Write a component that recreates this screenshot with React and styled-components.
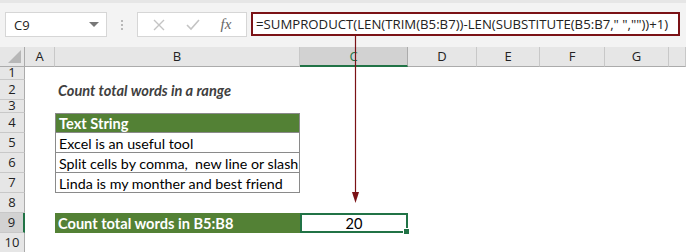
import React from "react";
import styled, { createGlobalStyle, css } from "styled-components";

const Global = createGlobalStyle`
  html, body { margin: 0; padding: 0; background: #ffffff; }
  body { width: 686px; height: 252px; overflow: hidden; }
`;

const UI_FONT = `"Open Sans", "Noto Sans", "DejaVu Sans", sans-serif`;
const CELL_FONT = `"Lato", "Open Sans", sans-serif`;
const GREEN = "#538135";
const SEL = "#217346";
const RED = "#7b1216";

const Page = styled.div`
  position: relative;
  width: 686px;
  height: 252px;
  overflow: hidden;
  background: #fff;
`;

const Toolbar = styled.div`
  height: 47px;
  box-sizing: border-box;
  background: #f3f3f3;
  border-top: 3px solid #e6e6e6;
  padding: 9px 6px 0 5px;
  display: flex;
  align-items: flex-start;
`;

const NameBox = styled.div`
  width: 102px;
  height: 25px;
  box-sizing: border-box;
  background: #fff;
  border: 1px solid #d6d6d6;
  display: flex;
  align-items: center;
  justify-content: space-between;
  padding: 0 7px 0 8px;
  font-family: ${UI_FONT};
  font-size: 13px;
  color: #222;
`;

const Caret = styled.span`
  width: 0;
  height: 0;
  border-left: 5px solid transparent;
  border-right: 5px solid transparent;
  border-top: 5px solid #777;
`;

const Dots = styled.div`
  width: 30px;
  height: 25px;
  display: flex;
  flex-direction: column;
  align-items: center;
  justify-content: center;
  gap: 2px;
  span {
    width: 2px;
    height: 2px;
    background: #b8b8b8;
  }
`;

const FxBox = styled.div`
  width: 110px;
  height: 25px;
  box-sizing: border-box;
  background: #fff;
  border: 1px solid #d6d6d6;
  display: flex;
  align-items: center;
  justify-content: space-around;
  padding: 0 4px;
  margin-right: 4px;
`;

const FxLabel = styled.span`
  font-family: "Liberation Serif", serif;
  font-style: italic;
  font-size: 15px;
  color: #666;
`;

const FormulaBox = styled.div`
  flex: 1;
  height: 24px;
  box-sizing: border-box;
  border: 2px solid ${RED};
  background: #fff;
  display: flex;
  align-items: center;
  padding-left: 3px;
  font-family: ${UI_FONT};
  font-size: 13.2px;
  color: #222;
  white-space: nowrap;
  overflow: hidden;
`;

const Sheet = styled.div`
  display: grid;
  grid-template-columns: 25px 30px 245px 108px 69px 63px 65px 64px 1fr;
  grid-template-rows: 20px 13px 20px 13px 20px 20px 20px 20px 20px 20px 20px;
`;

const headerBase = css`
  box-sizing: border-box;
  background: #e6e6e6;
  font-family: ${UI_FONT};
  font-size: 13px;
  color: #222;
  display: flex;
  align-items: center;
  justify-content: center;
  overflow: hidden;
  line-height: 1;
`;

const Corner = styled.div`
  ${headerBase};
  position: relative;
  border-right: 1px solid #ababab;
  border-bottom: 1px solid #ababab;
  &::after {
    content: "";
    position: absolute;
    right: 3px;
    bottom: 3px;
    width: 0;
    height: 0;
    border-left: 13px solid transparent;
    border-bottom: 13px solid #b7b7b7;
  }
`;

const ColHead = styled.div`
  ${headerBase};
  border-right: 1px solid #c8c8c8;
  border-bottom: 1px solid #ababab;
  ${(p) =>
    p.$selected &&
    css`
      background: #d2d2d2;
      color: ${SEL};
      border-bottom: 2px solid ${SEL};
      border-right-color: #ababab;
    `}
`;

const RowHead = styled.div`
  ${headerBase};
  border-right: 1px solid #ababab;
  border-bottom: 1px solid #c8c8c8;
  align-items: ${(p) => (p.$short ? "flex-end" : "center")};
  ${(p) =>
    p.$selected &&
    css`
      background: #d2d2d2;
      border-right: 2px solid ${SEL};
    `}
`;

const Cell = styled.div`
  box-sizing: border-box;
  font-family: ${CELL_FONT};
  font-size: 14.6px;
  color: #000;
  display: flex;
  align-items: center;
  padding-left: 3px;
  white-space: nowrap;
  overflow: visible;
  grid-column: ${(p) => p.$col};
  grid-row: ${(p) => p.$row};
`;

const Title = styled(Cell)`
  font-weight: 700;
  font-style: italic;
  color: #404040;
`;

const TableCell = styled(Cell)`
  border: 1px solid #8a8a8a;
  border-top: ${(p) => (p.$first ? "1px solid #8a8a8a" : "none")};
  background: ${(p) => (p.$head ? GREEN : "#fff")};
  color: ${(p) => (p.$head ? "#fff" : "#000")};
  font-weight: ${(p) => (p.$head ? 700 : 400)};
  font-size: ${(p) => (p.$head ? "14.6px" : "14.25px")};
  padding-top: ${(p) => (p.$first ? "0" : "1px")};
`;

const Label = styled(Cell)`
  background: ${GREEN};
  color: #fff;
  font-weight: 700;
`;

const Active = styled(Cell)`
  position: relative;
  border: 2px solid ${SEL};
  justify-content: center;
  padding-left: 0;
  &::after {
    content: "";
    position: absolute;
    right: -4px;
    bottom: -4px;
    width: 5px;
    height: 5px;
    background: ${SEL};
    border: 1px solid #fff;
  }
`;

const Arrow = styled.svg`
  position: absolute;
  left: 350px;
  top: 36px;
`;

const colNames = ["A", "B", "C", "D", "E", "F", "G", ""];
const rowShort = { 1: true, 3: true };

export default function App() {
  return (
    <Page>
      <Global />
      <Toolbar>
        <NameBox>
          <span>C9</span>
          <Caret />
        </NameBox>
        <Dots>
          <span />
          <span />
          <span />
        </Dots>
        <FxBox>
          <svg width="12" height="12" viewBox="0 0 12 12">
            <path d="M1 1 L11 11 M11 1 L1 11" stroke="#c4c4c4" strokeWidth="1.4" fill="none" />
          </svg>
          <svg width="14" height="12" viewBox="0 0 14 12">
            <path d="M1 6 L5 10 L13 1" stroke="#c4c4c4" strokeWidth="1.6" fill="none" />
          </svg>
          <FxLabel>fx</FxLabel>
        </FxBox>
        <FormulaBox>=SUMPRODUCT(LEN(TRIM(B5:B7))-LEN(SUBSTITUTE(B5:B7," ",""))+1)</FormulaBox>
      </Toolbar>
      <Sheet>
        <Corner />
        {colNames.map((c, i) => (
          <ColHead key={i} $selected={c === "C"}>
            {c}
          </ColHead>
        ))}
        {Array.from({ length: 10 }, (_, i) => i + 1).map((r) => (
          <RowHead key={r} style={{ gridRow: r + 1, gridColumn: 1 }} $short={rowShort[r]} $selected={r === 9}>
            {r}
          </RowHead>
        ))}
        <Title $col={3} $row={3}>Count total words in a range</Title>
        <TableCell $col={3} $row={5} $head $first>Text String</TableCell>
        <TableCell $col={3} $row={6}>Excel is an useful tool</TableCell>
        <TableCell $col={3} $row={7}>Split cells by comma,&nbsp; new line or slash</TableCell>
        <TableCell $col={3} $row={8}>Linda is my monther and best friend</TableCell>
        <Label $col={3} $row={10}>Count total words in B5:B8</Label>
        <Active $col={4} $row={10}>20</Active>
      </Sheet>
      <Arrow width="12" height="170" viewBox="0 0 12 170">
        <line x1="5.5" y1="0" x2="5.5" y2="158" stroke={RED} strokeWidth="1.2" />
        <polygon points="2,156 9,156 5.5,167" fill={RED} />
      </Arrow>
    </Page>
  );
}
